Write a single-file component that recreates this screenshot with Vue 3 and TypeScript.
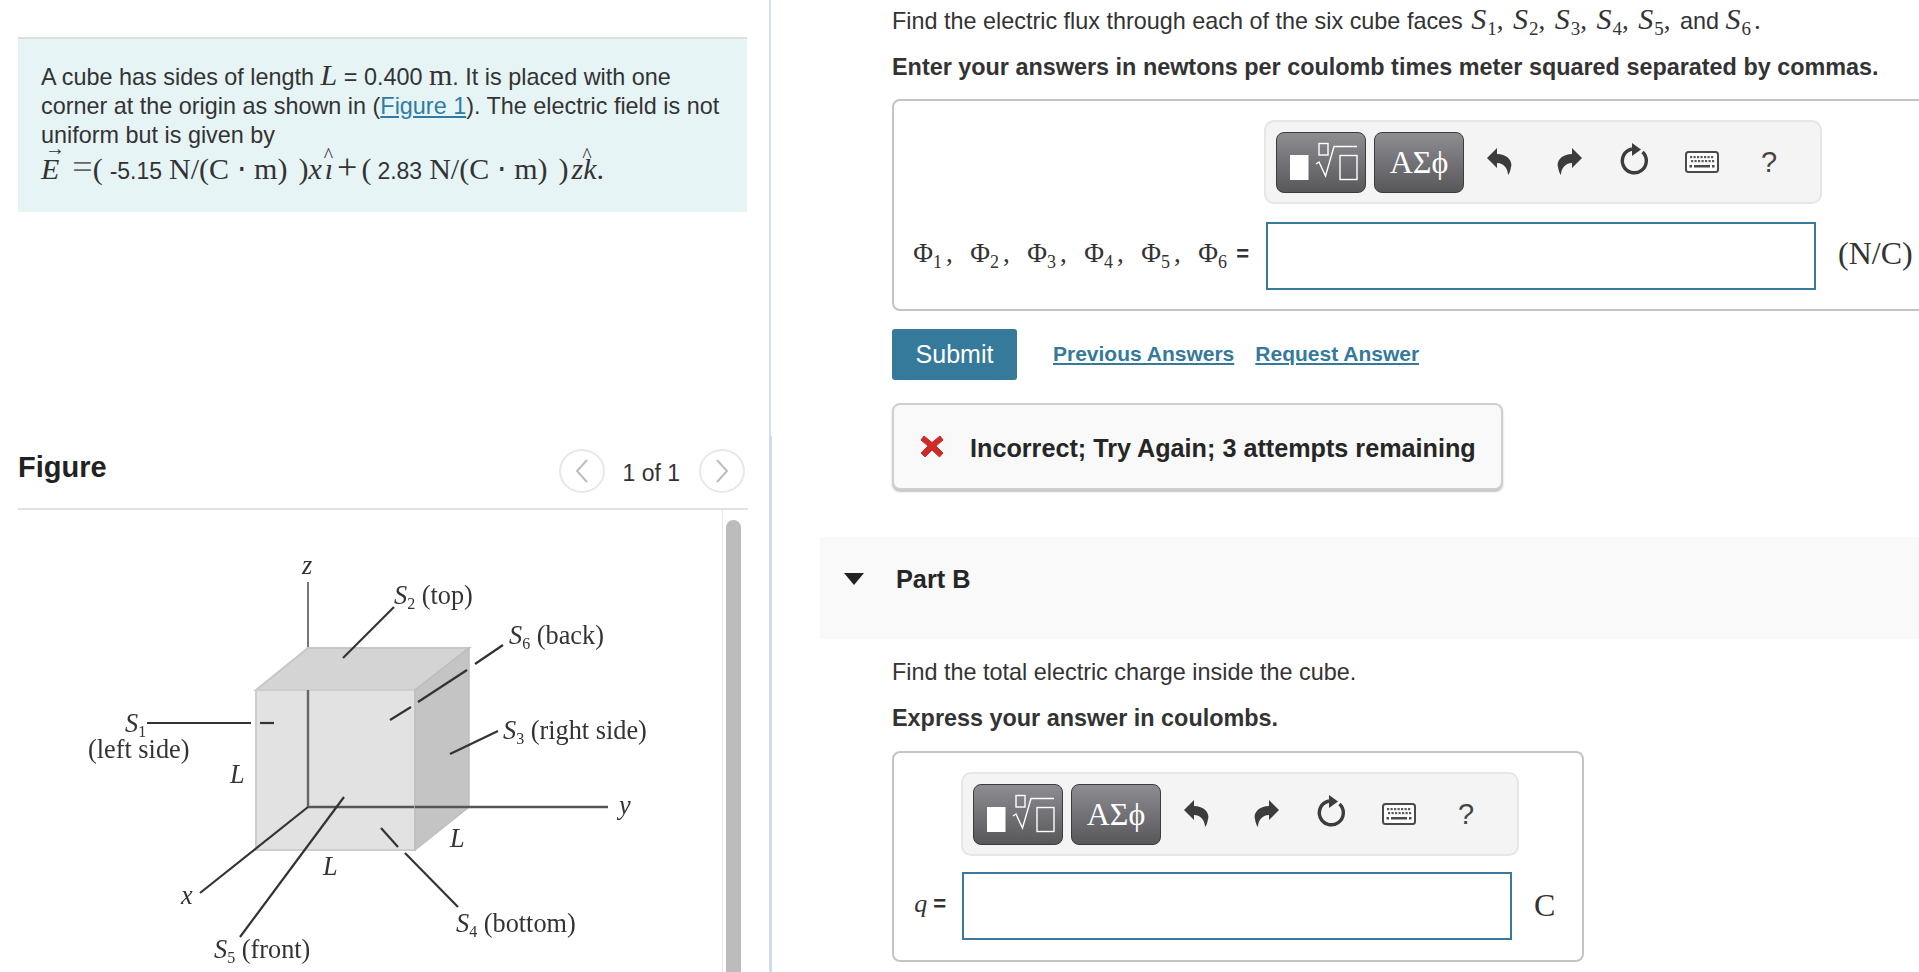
<script setup lang="ts">
interface Seg { x1: number; y1: number; x2: number; y2: number }
interface Label { x: number; y: number; sub: string; rest: string }
interface Plain { x: number; y: number; t: string }

const leaders: Seg[] = [
  { x1: 147, y1: 723, x2: 251, y2: 723 },
  { x1: 260, y1: 723, x2: 274, y2: 723 },
  { x1: 343, y1: 658, x2: 394, y2: 607 },
  { x1: 390, y1: 720, x2: 411, y2: 707 },
  { x1: 418, y1: 702, x2: 467, y2: 670 },
  { x1: 475, y1: 664, x2: 503, y2: 645 },
  { x1: 450, y1: 754, x2: 498, y2: 731 },
  { x1: 344, y1: 797, x2: 240, y2: 937 },
  { x1: 381, y1: 828, x2: 398, y2: 847 },
  { x1: 405, y1: 853, x2: 458, y2: 907 },
  { x1: 308, y1: 807, x2: 200, y2: 893 },
]
const labels: Label[] = [
  { x: 125, y: 732, sub: '1', rest: '' },
  { x: 394, y: 604, sub: '2', rest: ' (top)' },
  { x: 509, y: 644, sub: '6', rest: ' (back)' },
  { x: 503, y: 739, sub: '3', rest: ' (right side)' },
  { x: 456, y: 932, sub: '4', rest: ' (bottom)' },
  { x: 214, y: 958, sub: '5', rest: ' (front)' },
]
const vars: Plain[] = [
  { x: 302, y: 574, t: 'z' },
  { x: 619, y: 814, t: 'y' },
  { x: 181, y: 904, t: 'x' },
  { x: 230, y: 783, t: 'L' },
  { x: 323, y: 875, t: 'L' },
  { x: 450, y: 847, t: 'L' },
]
const faces = ['1', '2', '3', '4', '5', '6']
const keyDots = [
  [5, 5], [8.5, 5], [12, 5], [15.5, 5], [19, 5], [22.5, 5], [26, 5],
  [6, 9], [9.5, 9], [13, 9], [16.5, 9], [20, 9], [23.5, 9], [27, 9],
]
</script>

<template>
  <div class="page">
    <svg class="defs" width="0" height="0" aria-hidden="true">
      <defs>
        <symbol id="i-radical" viewBox="0 0 90 60">
          <rect x="14" y="23" width="18.5" height="25" fill="#fff" />
          <rect x="43" y="11.5" width="9" height="11.5" fill="none" stroke="#fff" stroke-width="1.4" />
          <path d="M40 32 L43 30 L49.5 44 L58 14.5 H81" fill="none" stroke="#fff" stroke-width="1.4" />
          <rect x="64" y="23.5" width="17" height="24" fill="none" stroke="#fff" stroke-width="1.4" />
        </symbol>
        <symbol id="i-undo" viewBox="0 0 26 28">
          <path d="M1 10 L11 0 V6 C21 6 27 13 25 19 C24.500 23 23 26 22 27 C22 21 18 15 11 15 V20 Z" fill="#3c3c3f" />
        </symbol>
        <symbol id="i-redo" viewBox="0 0 26 28">
          <path d="M25 10 L15 0 V6 C5 6 -1 13 1 19 C1.500 23 3 26 4 27 C4 21 8 15 15 15 V20 Z" fill="#3c3c3f" />
        </symbol>
        <symbol id="i-reset" viewBox="0 0 30 34">
          <path d="M13 8 A12 12 0 1 0 23.500 11" fill="none" stroke="#3c3c3f" stroke-width="3.4" />
          <path d="M13 2 L22 8.500 L13 15 Z" fill="#3c3c3f" />
        </symbol>
        <symbol id="i-keys" viewBox="0 0 34 22">
          <rect x="1" y="1" width="32" height="20" rx="2.500" fill="#fff" stroke="#4a4a4d" stroke-width="2" />
          <rect v-for="d in keyDots" :key="d.join()" :x="d[0]" :y="d[1]" width="2.200" height="2.200" fill="#5a5a5d" />
          <rect x="9" y="14" width="16" height="2.500" fill="#4a4a4d" />
          <rect x="4.500" y="14" width="2.500" height="2.500" fill="#4a4a4d" />
          <rect x="27" y="14" width="2.500" height="2.500" fill="#4a4a4d" />
        </symbol>
      </defs>
    </svg>

    <aside class="left">
      <section class="problem">
        <p>
          A cube has sides of length <i class="m big">L</i> = 0.400 <span class="m big">m</span>. It is placed with one
          corner at the origin as shown in (<a class="link" href="#">Figure 1</a>). The electric field is not
          uniform but is given by
        </p>
        <p class="formula">
          <i class="m vec">E</i><span class="m eq">=</span><span class="m">(</span><span class="num n1">-5.15</span><span class="m u1">N/(C ⋅ m)</span><span class="m p1">)</span><i class="m var-x">x</i><i class="m hat">ı</i><span class="m plus">+</span><span class="m">(</span><span class="num n2">2.83</span><span class="m u1">N/(C ⋅ m)</span><span class="m p1">)</span><i class="m var-z">z</i><i class="m hat">k</i><span class="m">.</span>
        </p>
      </section>

      <header class="fig-head">
        <h2>Figure</h2>
        <div class="pager">
          <span class="circle">
            <svg width="14" height="26" viewBox="0 0 14 26"><path d="M12 2 L2 13 L12 24" fill="none" stroke="#bdbdbd" stroke-width="2" /></svg>
          </span>
          <span class="count">1 of 1</span>
          <span class="circle">
            <svg width="14" height="26" viewBox="0 0 14 26"><path d="M2 2 L12 13 L2 24" fill="none" stroke="#bdbdbd" stroke-width="2" /></svg>
          </span>
        </div>
      </header>

      <div class="fig-body">
        <svg class="diagram" viewBox="0 510 722 462" width="722" height="462">
          <line x1="308" y1="582" x2="308" y2="648" stroke="#777" stroke-width="2" />
          <polygon points="256,690 308,648 469,648 415,690" fill="#d4d4d4" stroke="#c6c6c6" stroke-width="2" />
          <polygon points="256,690 415,690 415,850 256,850" fill="#e2e2e2" stroke="#cdcdcd" stroke-width="2" />
          <line x1="308" y1="690" x2="308" y2="807" stroke="#666" stroke-width="2.400" />
          <line x1="308" y1="807" x2="415" y2="807" stroke="#555" stroke-width="2.400" />
          <polygon points="415,690 469,648 469,807 415,850" fill="#c4c4c4" stroke="#bdbdbd" stroke-width="1.500" />
          <line x1="415" y1="807" x2="608" y2="807" stroke="#555" stroke-width="2.400" />
          <line v-for="(s, i) in leaders" :key="i" :x1="s.x1" :y1="s.y1" :x2="s.x2" :y2="s.y2" stroke="#333" stroke-width="2.200" />
          <text v-for="l in labels" :key="l.sub" class="dt" :x="l.x" :y="l.y"><tspan font-style="italic">S</tspan><tspan dy="5" font-size="16">{{ l.sub }}</tspan><tspan dy="-5">{{ l.rest }}</tspan></text>
          <text class="dt" x="88" y="758">(left side)</text>
          <text v-for="(v, i) in vars" :key="i" class="dt" font-style="italic" :x="v.x" :y="v.y">{{ v.t }}</text>
        </svg>
        <div class="track"><div class="thumb"></div></div>
      </div>
    </aside>

    <div class="divider"></div>

    <main class="right">
      <p class="line first">
        Find the electric flux through each of the six cube faces
        <template v-for="f in faces.slice(0, 5)" :key="f"><span class="sym"><i class="m">S</i><sub class="m">{{ f }}</sub><span class="m">,</span></span>{{ ' ' }}</template>and
        <span class="sym"><i class="m">S</i><sub class="m">6</sub><span class="m dot">.</span></span>
      </p>
      <p class="line strong">Enter your answers in newtons per coulomb times meter squared separated by commas.</p>

      <section class="answer wide">
        <div class="toolbar">
          <span class="tbtn"><svg width="90" height="60"><use href="#i-radical" /></svg></span>
          <span class="tbtn greek">ΑΣϕ</span>
          <svg class="ico undo" width="26" height="28"><use href="#i-undo" /></svg>
          <svg class="ico redo" width="26" height="28"><use href="#i-redo" /></svg>
          <svg class="ico reset" width="30" height="34"><use href="#i-reset" /></svg>
          <svg class="ico keys" width="34" height="22"><use href="#i-keys" /></svg>
          <span class="help">?</span>
        </div>
        <div class="entry">
          <span class="lab">
            <span v-for="(f, i) in faces" :key="f" class="phi"><span class="m">Φ</span><sub class="m">{{ f }}</sub><span v-if="i < 5" class="m comma">,</span></span>
            <span class="equals">=</span>
          </span>
          <span class="field"></span>
          <span class="m unit">(N/C)</span>
        </div>
      </section>

      <div class="actions">
        <button class="submit" type="button">Submit</button>
        <a class="act" href="#">Previous Answers</a>
        <a class="act" href="#">Request Answer</a>
      </div>

      <div class="feedback">
        <svg width="26" height="26" viewBox="0 0 26 26"><path d="M5 3 L13 9.500 L21 3 L24 7 L17 13 L24 20 L20.500 24 L13 17 L6 24 L2 20 L9 13 L2 7 Z" fill="#cf2a2a" stroke="#cf2a2a" stroke-linejoin="round" /></svg>
        <strong>Incorrect; Try Again; 3 attempts remaining</strong>
      </div>

      <div class="part">
        <svg width="20" height="12" viewBox="0 0 20 12"><path d="M0 0 H20 L10 12 Z" fill="#222" /></svg>
        <strong>Part B</strong>
      </div>

      <p class="line total">Find the total electric charge inside the cube.</p>
      <p class="line strong express">Express your answer in coulombs.</p>

      <section class="answer narrow">
        <div class="toolbar">
          <span class="tbtn"><svg width="90" height="60"><use href="#i-radical" /></svg></span>
          <span class="tbtn greek">ΑΣϕ</span>
          <svg class="ico undo" width="26" height="28"><use href="#i-undo" /></svg>
          <svg class="ico redo" width="26" height="28"><use href="#i-redo" /></svg>
          <svg class="ico reset" width="30" height="34"><use href="#i-reset" /></svg>
          <svg class="ico keys" width="34" height="22"><use href="#i-keys" /></svg>
          <span class="help">?</span>
        </div>
        <div class="entry">
          <span class="lab"><i class="m q">q</i><span class="equals">=</span></span>
          <span class="field"></span>
          <span class="m unit c">C</span>
        </div>
      </section>
    </main>
  </div>
</template>

<style>
html, body { margin: 0; overflow: hidden; background: #fff; }
</style>

<style scoped>
.page {
  width: 1919px;
  height: 972px;
  display: flex;
  overflow: hidden;
  background: #fff;
  color: #333;
  font-family: "Liberation Sans", Arial, sans-serif;
  font-size: 23.4px;
  line-height: 29px;
}
.defs { position: absolute; }
p { margin: 0; }
.m { font-family: "Liberation Serif", "Times New Roman", serif; }
.big { font-size: 30px; line-height: 0; }

.left {
  width: 769px;
  flex: none;
  padding-top: 37px;
  box-sizing: border-box;
}
.problem {
  margin: 0 22px 0 18px;
  height: 175px;
  box-sizing: border-box;
  padding: 24px 20px 0 23px;
  background: #e7f4f6;
  border-top: 2px solid #dddfdf;
}
.link { color: #2f7ca3; text-decoration: underline; }
.formula { font-size: 30px; white-space: nowrap; margin-top: 4px; height: 29px; }
.num { font-family: "Liberation Sans", Arial, sans-serif; font-size: 23px; }
.vec, .hat { position: relative; display: inline-block; }
.vec { margin-right: 4px; }
.vec::before {
  content: "→";
  position: absolute;
  left: 4px;
  top: -20px;
  font-size: 20px;
  font-style: normal;
}
.hat::before {
  content: "^";
  position: absolute;
  left: -1px;
  top: -13px;
  font-size: 20px;
  font-style: normal;
}
.eq { margin-left: 9px; font-size: 36px; line-height: 0; color: #666; }
.n1 { margin-left: 7px; }
.n2 { margin-left: 6px; }
.u1 { margin-left: 7px; }
.p1 { margin-left: 11px; }
.var-x { margin-right: 3px; }
.var-z { margin-left: 3px; }
.plus { font-size: 36px; line-height: 0; margin: 0 4px; }

.fig-head {
  margin: 237px 21px 0 18px;
  height: 59px;
  display: flex;
  justify-content: space-between;
  border-bottom: 2px solid #e2e2e2;
}
h2 {
  margin: 0;
  font-size: 29px;
  line-height: 36px;
  color: #222;
}
.pager {
  display: flex;
  align-items: center;
  height: 44px;
  margin-right: 3px;
  gap: 19px;
}
.circle {
  width: 46px;
  height: 44px;
  box-sizing: border-box;
  border: 2px solid #e8e8e8;
  border-radius: 50%;
  display: flex;
  align-items: center;
  justify-content: center;
}
.circle:first-child { margin-right: -2px; }
.count { padding-top: 5px; font-size: 23px; }

.fig-body {
  display: flex;
  height: 462px;
}
.diagram { flex: none; filter: blur(0.5px); }
.track {
  width: 26px;
  box-sizing: border-box;
  border-left: 1px solid #e8e8e8;
  padding: 10px 0 0 3px;
}
.thumb {
  width: 15px;
  height: 100%;
  border-radius: 8px 8px 0 0;
  background: #bcbcbc;
}
.dt {
  font-family: "Liberation Serif", "Times New Roman", serif;
  font-size: 26.3px;
  fill: #333;
  white-space: pre;
}

.divider {
  flex: none;
  width: 3px;
  height: 972px;
  background: linear-gradient(to right, #d6e1ee 2px, #fff 2px) top / 100% 436px no-repeat, #cfdbeb;
}
.right {
  flex: 1;
  min-width: 0;
  padding-left: 120px;
  box-sizing: border-box;
  overflow: hidden;
}
.line { white-space: nowrap; }
.first { margin-top: 7px; height: 29px; }
.sym { font-size: 27px; line-height: 0; }
.sym:first-of-type { margin-left: 2px; }
.sym i { font-size: 30px; line-height: 0; margin-right: 1px; }
.sym sub { font-size: 19px; line-height: 0; }
.sym > span { margin-right: 3px; }
.sym > .dot { margin-left: 3px; }
.phi sub { font-size: 18px; line-height: 0; }
.strong { font-weight: 700; }
.first + .strong { margin-top: 17px; }

.answer {
  box-sizing: border-box;
  border: 2px solid #c4c4c4;
  border-radius: 8px;
  background: #fff;
}
.wide {
  width: 1100px;
  height: 212px;
  margin-top: 17px;
  padding: 19px 0 0 370px;
}
.narrow {
  width: 692px;
  height: 211px;
  margin-top: 18px;
  padding: 19px 0 0 67px;
}
.toolbar {
  width: 558px;
  height: 84px;
  box-sizing: border-box;
  padding-left: 10px;
  display: flex;
  align-items: center;
  background: #f4f4f4;
  border: 2px solid #e6e6e6;
  border-radius: 10px;
}
.tbtn {
  flex: none;
  width: 90px;
  height: 61px;
  box-sizing: border-box;
  border: 1px solid #3c3c3e;
  border-radius: 8px;
  background: linear-gradient(#8d8d92, #58585b);
  display: flex;
  margin-right: 8px;
}
.tbtn svg { margin: -1px; }
.greek {
  align-items: center;
  justify-content: center;
  color: #fff;
  font-family: "Liberation Serif", "DejaVu Serif", serif;
  font-size: 32px;
}
.ico { flex: none; }
.undo { margin-left: 14px; }
.redo { margin-left: 45px; }
.reset { margin-left: 36px; margin-top: -8px; }
.keys { margin-left: 36px; }
.help {
  margin-left: 42px;
  font-size: 29px;
  color: #444;
}
.entry {
  display: flex;
  align-items: center;
  margin-top: 18px;
  position: relative;
}
.narrow .entry { margin-top: 16px; }
.lab {
  position: absolute;
  right: 100%;
  top: 0;
  height: 62px;
  display: flex;
  align-items: center;
  white-space: nowrap;
  padding-right: 15px;
  font-size: 27px;
}
.phi { width: 57px; }
.phi sub { margin-right: 1px; }
.comma { margin-left: 3px; }
.phi:nth-last-child(2) { width: 32px; }
.equals { font-size: 22px; margin-left: 6px; font-weight: 700; }
.q { font-size: 26px; }
.field {
  flex: none;
  width: 550px;
  height: 68px;
  box-sizing: border-box;
  border: 2px solid #38799c;
  background: #fff;
}
.wide .field { margin-left: 2px; }
.narrow .field { margin-left: 1px; }
.unit {
  margin-left: 22px;
  margin-top: -6px;
  font-size: 32px;
  white-space: nowrap;
}
.unit.c { margin-top: -2px; }

.actions {
  display: flex;
  align-items: center;
  margin-top: 18px;
}
.submit {
  width: 125px;
  height: 51px;
  border: 0;
  border-radius: 3px;
  background: #35799b;
  color: #fff;
  font: 25px "Liberation Sans", Arial, sans-serif;
  margin-right: 36px;
  padding: 0;
}
.act {
  color: #35799b;
  font-size: 21px;
  font-weight: 700;
  text-decoration: underline;
  margin-right: 21px;
  margin-top: -3px;
}
.feedback {
  width: 611px;
  height: 87px;
  box-sizing: border-box;
  margin-top: 23px;
  display: flex;
  align-items: center;
  padding-left: 25px;
  gap: 25px;
  background: #f9f9f9;
  border: 2px solid #cfcfcf;
  border-radius: 8px;
  box-shadow: 0 2px 2px #c4c4c4;
  color: #262626;
  font-size: 25.2px;
}
.feedback svg { flex: none; margin-top: -2px; }
.feedback strong { padding-top: 3px; }
.part {
  margin: 47px 0 0 -72px;
  height: 102px;
  display: flex;
  align-items: flex-start;
  background: #f9f9f9;
  padding: 28px 0 0 24px;
  box-sizing: border-box;
  font-size: 25.3px;
  color: #262626;
}
.part svg { margin: 8px 32px 0 0; }
.total { margin-top: 19px; }
.express { margin-top: 17px; }
</style>
